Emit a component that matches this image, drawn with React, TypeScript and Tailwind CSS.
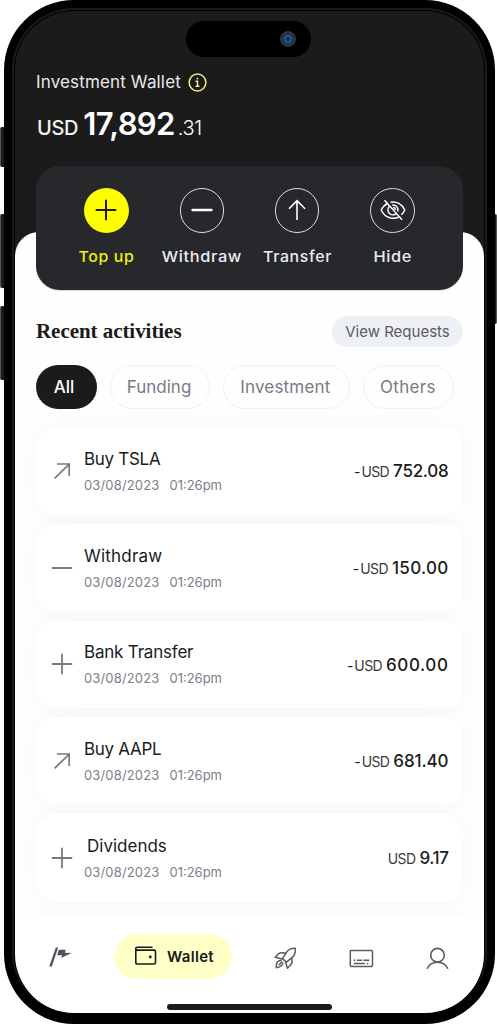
import type { ReactNode } from "react";

type ActivityKind = "trade" | "out" | "in";

interface Activity {
  title: string;
  kind: ActivityKind;
  amount: string;
  negative: boolean;
  titleClass: string;
  amountClass: string;
}

const activities: Activity[] = [
  { title: "Buy TSLA", kind: "trade", amount: "752.08", negative: true, titleClass: "tracking-[-0.3px]", amountClass: "tracking-[-0.25px]" },
  { title: "Withdraw", kind: "out", amount: "150.00", negative: true, titleClass: "tracking-[0.2px]", amountClass: "tracking-[0.3px]" },
  { title: "Bank Transfer", kind: "in", amount: "600.00", negative: true, titleClass: "tracking-[-0.2px]", amountClass: "tracking-[0.6px]" },
  { title: "Buy AAPL", kind: "trade", amount: "681.40", negative: true, titleClass: "tracking-[-0.3px]", amountClass: "tracking-[-0.1px]" },
  { title: "Dividends", kind: "in", amount: "9.17", negative: false, titleClass: "pl-[3px] tracking-[0px]", amountClass: "tracking-[-0.4px]" },
];

const filters = [
  { label: "All", className: "w-[61px] bg-[#1b1b1b] pr-[5px] font-medium text-white" },
  { label: "Funding", className: "w-[99.5px] border border-[#edf1f6] pr-[2px] text-[#7b7985]" },
  { label: "Investment", className: "w-[126.5px] border border-[#edf1f6] pr-[2px] tracking-[0.2px] text-[#7b7985]" },
  { label: "Others", className: "w-[91px] border border-[#edf1f6] pr-[1px] tracking-[0.3px] text-[#7b7985]" },
];

function ActivityIcon({ kind }: { kind: ActivityKind }) {
  return (
    <svg width="22" height="22" viewBox="0 0 22 22" fill="none" stroke="#7a7785" strokeWidth="1.8">
      {kind === "trade" && <path d="M3.6 18.3 18 4.3M6 4h12.2v12" strokeWidth="1.7" />}
      {kind === "out" && <path d="M1.5 11h19" strokeLinecap="round" />}
      {kind === "in" && <path d="M1.5 11h19M11 1.5v19" strokeLinecap="round" />}
    </svg>
  );
}

function Action({
  label,
  active = false,
  labelClass,
  children,
}: {
  label: string;
  active?: boolean;
  labelClass: string;
  children: ReactNode;
}) {
  return (
    <div className="flex w-[95.4px] flex-col items-center">
      <div
        className={
          active
            ? "flex size-[44.5px] items-center justify-center rounded-full bg-[#ffff00] text-[#1b1b1b]"
            : "flex size-[44.5px] items-center justify-center rounded-full border border-[#dededf] text-white"
        }
      >
        {children}
      </div>
      <span
        className={`mt-[14px] text-[15px] leading-[20px] font-medium tracking-[0.6px] whitespace-nowrap ${
          active ? "text-[#f2f20a]" : "text-[#ededee]"
        } ${labelClass}`}
      >
        {label}
      </span>
    </div>
  );
}

function ActivityCard({ item }: { item: Activity }) {
  return (
    <div className="flex h-[87.6px] shrink-0 items-center rounded-[20px] bg-white pr-[14.5px] pl-[15px] shadow-[0_0_22px_rgba(0,0,0,0.035)]">
      <ActivityIcon kind={item.kind} />
      <div className="ml-[11px] flex-1">
        <p className={`text-[17px] leading-[22px] text-[#1b1b1b] ${item.titleClass}`}>{item.title}</p>
        <p className="mt-[6px] flex gap-[10px] text-[13px] leading-[18px] text-[#7f7d89]">
          <span className="tracking-[0.15px]">03/08/2023</span>
          <span className="tracking-[0px]">01:26pm</span>
        </p>
      </div>
      <p className="flex items-baseline pt-[2px] text-[#1b1b1b]">
        {item.negative && <span className="mr-px text-[14px]">-</span>}
        <span className="mr-[4px] text-[14px] tracking-[-0.6px] text-[#3a3a3c]">USD</span>
        <span className={`text-[17px] font-medium ${item.amountClass}`}>{item.amount}</span>
      </p>
    </div>
  );
}

function NavBar() {
  return (
    <nav className="flex h-[96px] shrink-0 flex-col items-center bg-white">
      <div className="flex w-full pt-[17px]">
        <div className="flex h-[45px] w-[99px] items-center pl-[33px]">
          <svg width="24" height="24" viewBox="0 0 24 24" fill="#53515d">
            <path d="M7.8 2.4h2.4L3.8 21.6H1.3z" />
            <path d="M10.8 4.8h6.8l-.6 3 6.6.3-10.4 5 .9-2.9H9.2z" />
          </svg>
        </div>
        <div className="flex h-[44.5px] w-[118px] items-center rounded-full bg-[#ffffc8] pl-[20px]">
          <svg width="24" height="24" viewBox="0 0 24 24" fill="none" stroke="#1b1b1b" strokeWidth="1.6" strokeLinejoin="round">
            <path d="M18.5 3.2H3.2A1.4 1.4 0 0 0 1.8 4.6v14a1.4 1.4 0 0 0 1.4 1.4h16.9a1.4 1.4 0 0 0 1.4-1.4V7.5a1.4 1.4 0 0 0-1.4-1.4H3.2a1.4 1.4 0 0 1-1.4-1.4" />
            <circle cx="16.3" cy="13" r="1.4" fill="#1b1b1b" stroke="none" />
          </svg>
          <span className="ml-[9px] pt-px text-[15px] font-semibold tracking-[0.3px] text-[#1b1b1b]">Wallet</span>
        </div>
        <div className="flex h-[48px] flex-1 items-center">
          <svg className="ml-[42px]" width="23" height="24" viewBox="0 0 23 24" fill="none" stroke="#5b5965" strokeWidth="1.5" strokeLinejoin="round" strokeLinecap="round">
            <path d="M21.2 2.3c-3.2-.2-6.200.900-8.400 3.500L8.400 12.600l4 3.500 6.200-4.900c2.200-2.300 3-5.300 2.600-8.900z" />
            <path d="M12 7.300C8.300 6.200 5.800 6.700 4.300 7.900L1.200 11.200l7.200 1.700" />
            <path d="M17.700 12.600c.900 3.200.3 4.600-.8 6l-3.400 3.600-1.900-5.900" />
            <path d="M7.200 14.200c-3.400.300-5.300 3-5 7.500 3.500-.5 6-1.700 6.700-4.600M5.200 18.700l2.500-2.700" />
          </svg>
          <svg className="mt-px ml-[52px]" width="25" height="24" viewBox="0 0 25 24" fill="none" stroke="#5b5965" strokeWidth="1.5">
            <rect x="1.3" y="3.6" width="22.2" height="16" rx="1" />
            <path d="M4.8 13.3h1.5M8 13.3h5M14.3 13.3h6M4.8 16.5h11M17.8 16.5h1.5" />
          </svg>
          <svg className="mt-px ml-[51px]" width="25" height="24" viewBox="0 0 25 24" fill="none" stroke="#5b5965" strokeWidth="1.6">
            <circle cx="12.5" cy="8.2" r="6.8" />
            <path d="M2.1 21.8c3.7-8.700 17.1-8.700 20.800 0" />
          </svg>
        </div>
      </div>
      <div className="mt-[21.5px] h-[6px] w-[165px] rounded-full bg-[#1b1b1b]" />
    </nav>
  );
}

export default function App() {
  return (
    <div className="relative h-[1024px] w-[497px] overflow-hidden bg-white font-['Inter','Liberation_Sans',sans-serif]">
      {/* hardware buttons */}
      <div className="absolute top-[127px] left-0 h-[40px] w-[6px] rounded-l-[2px] border-l border-[#555] bg-[#1b1b1b]" />
      <div className="absolute top-[214px] left-0 h-[74px] w-[6px] rounded-l-[2px] border-l border-[#555] bg-[#1b1b1b]" />
      <div className="absolute top-[306px] left-0 h-[74px] w-[6px] rounded-l-[2px] border-l border-[#555] bg-[#1b1b1b]" />
      <div className="absolute top-[214px] right-0 h-[110px] w-[5px] rounded-r-[2px] border-r border-[#555] bg-[#1b1b1b]" />

      <div className="relative ml-[4px] h-[1024px] w-[491px] rounded-[70px] bg-black pt-[8px] pr-[8px] pb-[10px] pl-[8px]">
        <div className="h-full rounded-[62px] bg-[#1b1b1b] px-[2px] pt-[2px]">
          <div className="h-full rounded-[60px] bg-black p-px pb-0">
            <div className="flex h-[1002px] w-[469px] flex-col overflow-hidden rounded-[59px] bg-[#1b1b1b]">
              <header className="h-[221px] shrink-0 pl-[21px] text-white">
                <div className="flex pt-[10px] pl-[150px]">
                  <div className="flex h-[36px] w-[125px] items-center justify-end rounded-full bg-black pr-[15px]">
                    <div className="flex size-[16px] items-center justify-center rounded-full bg-[#303236]">
                      <div className="size-[8px] rounded-full border-2 border-[#1459ad] bg-[#0b2750]" />
                    </div>
                  </div>
                </div>
                <div className="mt-[14px] flex items-center">
                  <span className="text-[17px] leading-[22px] tracking-[0.15px] text-[#e9e9e9]">Investment Wallet</span>
                  <svg className="ml-[7px]" width="19" height="19" viewBox="0 0 19 19" fill="none" stroke="#ecec83" strokeWidth="1.5">
                    <circle cx="9.5" cy="9.5" r="8.4" />
                    <path d="M7.5 8.3h2v5M7.5 13.3h4M9.4 4.8v1.7" />
                  </svg>
                </div>
                <div className="mt-[11px] ml-px flex items-baseline leading-[40px]">
                  <span className="text-[20px] font-medium tracking-[-0.3px] text-[#f2f2f2]">USD</span>
                  <span className="ml-[5px] text-[31px] font-semibold tracking-[-0.6px]">17,892</span>
                  <span className="ml-[3px] text-[20px] font-light tracking-[-0.4px]">.31</span>
                </div>
              </header>

              <main className="flex min-h-0 flex-1 flex-col rounded-t-[24px] bg-[#fefefe] px-[21px]">
                <section className="-mt-[66px] flex h-[123.5px] shrink-0 justify-center rounded-[24px] bg-[#27282c] pt-[22px] shadow-[0_1px_0_rgba(0,0,0,0.15)]">
                  <Action label="Top up" active labelClass="scale-x-[1.06]">
                    <svg width="22" height="22" viewBox="0 0 22 22" stroke="currentColor" strokeWidth="2" strokeLinecap="round">
                      <path d="M1.5 11h19M11 1.5v19" />
                    </svg>
                  </Action>
                  <Action label="Withdraw" labelClass="scale-x-[1.09]">
                    <svg width="22" height="22" viewBox="0 0 22 22" stroke="currentColor" strokeWidth="2.4" strokeLinecap="round">
                      <path d="M1.5 11h19" />
                    </svg>
                  </Action>
                  <Action label="Transfer" labelClass="scale-x-[1.06]">
                    <svg width="22" height="22" viewBox="0 0 22 22" fill="none" stroke="currentColor" strokeWidth="1.6">
                      <path d="M11 21V2M3 9.8 11 1.7l8 8.1" />
                    </svg>
                  </Action>
                  <Action label="Hide" labelClass="scale-x-[1.09]">
                    <svg width="26" height="22" viewBox="0 0 26 22" fill="none" stroke="currentColor" strokeWidth="1.5">
                      <path d="M8 4.200C5 5.600 2.600 8 1.200 11c4 8.600 12.600 10 18.300 6.600M10.500 3.200C16.500 2 22 5 24.800 11c-.9 1.900-2 3.500-3.400 4.700" />
                      <path d="M9.300 7.600a4.900 4.900 0 0 0 6.600 7.200M12.200 6.200a4.900 4.900 0 0 1 5.500 6.300" />
                      <path d="M13 8.600a2.400 2.400 0 0 1 2.400 2.400" />
                      <path d="M4.500 1.200 22 20.800" />
                    </svg>
                  </Action>
                </section>

                <div className="mt-[26.5px] flex h-[31px] shrink-0 items-center justify-between">
                  <h2 className="font-['Liberation_Serif',serif] text-[21px] font-bold tracking-[-0.05px] text-[#1b1b1b]">Recent activities</h2>
                  <button type="button" className="flex h-[31px] w-[131px] items-center justify-center rounded-full bg-[#edf1f6] pt-px text-[15px] text-[#5c5b63]">
                    View Requests
                  </button>
                </div>

                <div className="mt-[17.5px] flex shrink-0 gap-[13.3px]">
                  {filters.map((filter) => (
                    <button
                      key={filter.label}
                      type="button"
                      className={`flex h-[44.5px] shrink-0 items-center justify-center rounded-full pt-[2px] text-[17px] ${filter.className}`}
                    >
                      {filter.label}
                    </button>
                  ))}
                </div>

                <div className="mt-[18px] flex min-h-0 flex-1 flex-col gap-[9.2px]">
                  {activities.map((item) => (
                    <ActivityCard key={item.title} item={item} />
                  ))}
                  <div className="h-[6px] shrink-0 rounded-t-[20px] bg-[#fcfcfc] shadow-[0_0_22px_rgba(0,0,0,0.035)]" />
                </div>
              </main>
              <NavBar />
            </div>
          </div>
        </div>
      </div>
    </div>
  );
}
